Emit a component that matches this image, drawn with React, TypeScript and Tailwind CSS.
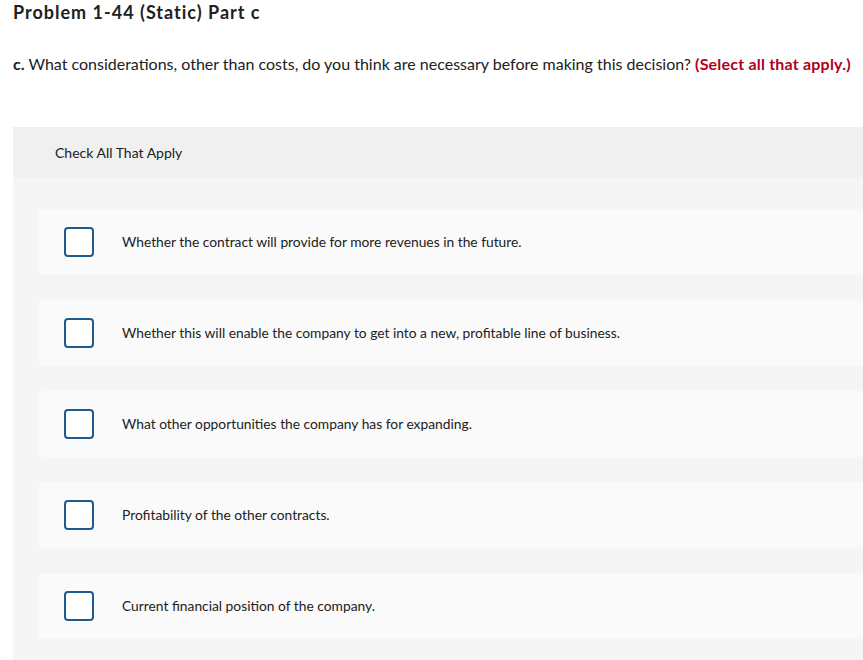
const options = [
  'Whether the contract will provide for more revenues in the future.',
  'Whether this will enable the company to get into a new, profitable line of business.',
  'What other opportunities the company has for expanding.',
  'Profitability of the other contracts.',
  'Current financial position of the company.',
]

export default function App() {
  return (
    <div className="min-h-[660px] bg-white text-[#212121] font-['Lato',sans-serif] overflow-hidden">
      <div className="pl-[13px]">
        <h1 className="pt-[1px] text-[18px] font-bold leading-[22px] tracking-[1px]">Problem 1-44 (Static) Part c</h1>
        <p className="mt-[31px] text-[16px] leading-[20px] whitespace-nowrap">
          <span className="font-bold">c.</span> What considerations, other than costs, do you think are necessary before
          making this decision?{' '}
          <span className="font-bold text-[#b0001c] tracking-[0.2px]">(Select all that apply.)</span>
        </p>

        <div className="mt-[53px] bg-[#f5f5f5] pb-[21px]">
          <div className="h-[50px] bg-[#f0f0f0] pl-[42px] flex items-center text-[14px]">Check All That Apply</div>
          <div className="pl-[26px] pt-[32px] flex flex-col gap-[25px]">
            {options.map((o) => (
              <label key={o} className="h-[66px] bg-[#fafafa] rounded-l-[3px] flex items-center pl-[25px] cursor-pointer">
                <span className="w-[30px] h-[30px] border-2 border-[#1e5a8e] rounded-[4px] bg-white shrink-0" />
                <span className="ml-[28px] text-[13.8px]">{o}</span>
              </label>
            ))}
          </div>
        </div>
      </div>
    </div>
  )
}
